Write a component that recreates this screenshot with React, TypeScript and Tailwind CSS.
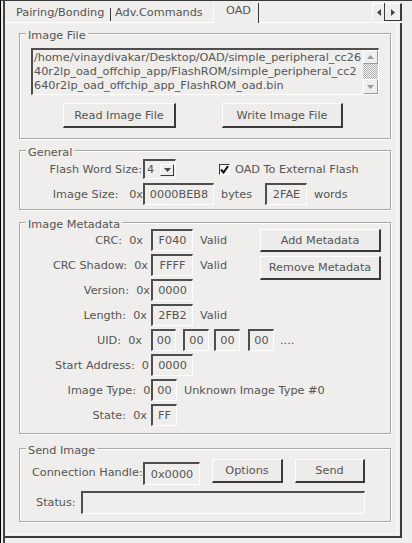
import React from 'react';

const sunken =
  'border-t-2 border-l-2 border-r border-b border-t-[#4e4e4e] border-l-[#4e4e4e] border-r-white border-b-white';
const raised =
  'border-t border-l border-r-2 border-b-2 border-t-white border-l-white border-r-[#3a3a3a] border-b-[#3a3a3a] bg-[#edecea]';

type Kids = { children?: React.ReactNode; className?: string };

function Group({ title, className = '', children }: Kids & { title: string }) {
  return (
    <div
      className={`relative ml-[14px] w-[372px] border border-[#a8a8a8] shadow-[inset_1px_1px_0_#fff,1px_1px_0_#fff] ${className}`}
    >
      <span className="absolute left-[6px] -top-[5px] px-[2px] leading-[14px] bg-[#efeeec]">{title}</span>
      {children}
    </div>
  );
}

function Field({ value = '', className = '' }: { value?: string; className?: string }) {
  return <div className={`${sunken} flex items-center justify-center h-[22px] ${className}`}>{value}</div>;
}

function Btn({ label, className = '' }: { label: string; className?: string }) {
  return <div className={`${raised} flex items-center justify-center ${className}`}>{label}</div>;
}

function Arrow({ dir, color = '#444' }: { dir: 'up' | 'down' | 'left' | 'right'; color?: string }) {
  const pts = {
    up: '0,4 3.5,0 7,4',
    down: '0,0 7,0 3.5,4',
    left: '4,0 4,7 0,3.5',
    right: '0,0 0,7 4,3.5',
  }[dir];
  const vert = dir === 'up' || dir === 'down';
  return (
    <svg width={vert ? 7 : 4} height={vert ? 4 : 7} viewBox={vert ? '0 0 7 4' : '0 0 4 7'}>
      <polygon points={pts} fill={color} />
    </svg>
  );
}

function MetaRow({
  label,
  pr = '',
  span = '',
  children,
}: Kids & { label: string; pr?: string; span?: string }) {
  return (
    <div className="flex items-center h-[22px]">
      <div className={`w-[131px] flex justify-end overflow-hidden whitespace-pre ${pr}`}>
        <span className={span}>{label}</span>
      </div>
      {children}
    </div>
  );
}

export default function App() {
  return (
    <div className="w-[412px] h-[543px] overflow-hidden flex bg-[#efeeec] border-t border-t-[#3a3a3a] border-l border-l-black font-['DejaVu_Sans',sans-serif] text-[11.25px] leading-[13px] text-[#555]">
      <div className="w-[2px] shrink-0" />
      <div className="w-[2px] shrink-0 bg-[#444]" />
      <div className="flex flex-col w-[397px]">
        {/* tab strip */}
        <div className="flex h-[22px] w-[397px]">
          <div className="w-[105px] pl-[11px] pt-[5px] border-b border-b-white whitespace-nowrap">Pairing/Bonding</div>
          <div className="w-px h-[22px] pt-[7px] border-b border-b-white">
            <div className="h-[13px] bg-[#3a3a3a]" />
          </div>
          <div className="w-[102px] pl-[4px] pt-[5px] border-b border-b-white whitespace-nowrap">Adv.Commands</div>
          <div className="self-end w-[46px] h-[20px] pt-[1px] pl-[12px] border-l border-l-white border-r border-r-[#3a3a3a]">
            OAD
          </div>
          <div className="flex-1 flex justify-end border-b border-b-white">
            <div className="flex mt-[2px] h-[18px]">
              <div className="w-[12px] flex items-center justify-center border-t border-t-white border-l border-l-white">
                <Arrow dir="left" />
              </div>
              <div className="w-px bg-[#3a3a3a]" />
              <div className="w-[17px] flex items-center justify-center border-t border-t-white border-r-2 border-r-[#3a3a3a] border-b border-b-[#3a3a3a]">
                <Arrow dir="right" />
              </div>
            </div>
          </div>
        </div>

        {/* page */}
        <div className="h-[515px] w-[397px] border-r-2 border-b-2 border-[#3a3a3a] shadow-[inset_-2px_-2px_0_#efeeec,inset_-3px_-3px_0_#fafafa] pt-[10px]">
          <Group title="Image File" className="h-[106px]">
            <div className="ml-[11px] mt-[14px] w-[348px] h-[47px] flex border-t-2 border-l-2 border-r border-b border-t-[#4e4e4e] border-l-[#4e4e4e] border-r-white border-b-white">
              <div className="flex-1 pl-[1px] pt-[1px] leading-[14px] whitespace-nowrap overflow-hidden">
                <div>/home/vinaydivakar/Desktop/OAD/simple_peripheral_cc26</div>
                <div>40r2lp_oad_offchip_app/FlashROM/simple_peripheral_cc2</div>
                <div>640r2lp_oad_offchip_app_FlashROM_oad.bin</div>
              </div>
              <div className="w-[15px] flex flex-col">
                <div className="h-[14px] flex items-center justify-center border-t border-l border-t-white border-l-white border-r border-b border-r-[#9a9a9a] border-b-[#9a9a9a]">
                  <Arrow dir="up" color="#9a9a9a" />
                </div>
                <div className="flex-1 bg-[image:repeating-conic-gradient(#b0b0b0_0%_25%,#f2f2f2_0%_50%)] bg-[length:2px_2px]" />
                <div className="h-[15px] flex items-center justify-center border-t border-l border-t-white border-l-white border-r border-b border-r-[#9a9a9a] border-b-[#9a9a9a]">
                  <Arrow dir="down" color="#9a9a9a" />
                </div>
              </div>
            </div>
            <div className="flex mt-[8px] ml-[43px]">
              <Btn label="Read Image File" className="w-[113px] h-[25px]" />
              <Btn label="Write Image File" className="ml-[46px] w-[121px] h-[25px]" />
            </div>
          </Group>

          <Group title="General" className="mt-[11px] h-[60px]">
            <div className="flex items-center h-[20px] mt-[8px]">
              <div className="w-[123px] pr-[1px] text-right whitespace-nowrap">Flash Word Size:</div>
              <div className={`${sunken} w-[33px] h-[20px] flex items-center justify-between pl-[2px]`}>
                <span>4</span>
                <div className="mr-[1px] w-[14px] h-[12px] flex items-center justify-center border-t border-l border-t-white border-l-white border-r border-b border-r-[#3a3a3a] border-b-[#3a3a3a]">
                  <Arrow dir="down" />
                </div>
              </div>
              <div className="ml-[43px] w-[11px] h-[11px] flex items-center justify-center border-t border-l border-t-[#3a3a3a] border-l-[#3a3a3a] border-r border-b border-r-white border-b-white bg-[#f4f4f4]">
                <svg width="9" height="9" viewBox="0 0 9 9">
                  <path d="M1 4.5 L3.5 7.5 L8 1.2" fill="none" stroke="#111" strokeWidth="2" />
                </svg>
              </div>
              <span className="ml-[5px] whitespace-nowrap">OAD To External Flash</span>
            </div>
            <div className="flex items-center h-[22px] mt-[4px]">
              <div className="w-[123px] text-right whitespace-pre">Image Size:   0x</div>
              <Field value="0000BEB8" className="w-[71px]" />
              <span className="ml-[7px]">bytes</span>
              <Field value="2FAE" className="ml-[13px] w-[42px]" />
              <span className="ml-[7px]">words</span>
            </div>
          </Group>

          <Group title="Image Metadata" className="mt-[12px] h-[212px]">
            <div className="flex flex-col gap-[3px] pt-[6px] pr-[9px]">
              <MetaRow label="CRC:  0x" pr="pr-[8px]">
                <Field value="F040" className="w-[42px]" />
                <span className="ml-[7px]">Valid</span>
                <Btn label="Add Metadata" className="ml-auto self-start w-[121px] h-[23px]" />
              </MetaRow>
              <MetaRow label="CRC Shadow:  0x" pr="pr-[3px]">
                <Field value="FFFF" className="w-[42px]" />
                <span className="ml-[7px]">Valid</span>
                <Btn label="Remove Metadata" className="ml-auto self-start mt-[2px] w-[121px] h-[24px]" />
              </MetaRow>
              <MetaRow label="Version:  0x" pr="pr-[1px]">
                <Field value="0000" className="w-[42px]" />
              </MetaRow>
              <MetaRow label="Length:  0x" pr="pr-[4px]">
                <Field value="2FB2" className="w-[42px]" />
                <span className="ml-[7px]">Valid</span>
              </MetaRow>
              <MetaRow label="UID:  0x" pr="pr-[9px]">
                <Field value="00" className="w-[25px]" />
                <Field value="00" className="ml-[7px] w-[26px]" />
                <Field value="00" className="ml-[5px] w-[26px]" />
                <Field value="00" className="ml-[8px] w-[26px]" />
                <span className="ml-[6px]">....</span>
              </MetaRow>
              <MetaRow label="Start Address:  0" pr="pr-[2px]">
                <Field value="0000" className="w-[42px]" />
              </MetaRow>
              <MetaRow label="Image Type:  0x" span="mr-[-6px]">
                <Field value="00" className="w-[26px]" />
                <span className="ml-[7px] whitespace-nowrap">Unknown Image Type #0</span>
              </MetaRow>
              <MetaRow label="State:  0x" pr="pr-[4px]">
                <Field value="FF" className="w-[26px]" />
              </MetaRow>
            </div>
          </Group>

          <Group title="Send Image" className="mt-[14px] h-[74px]">
            <div className="flex items-start h-[26px] mt-[10px] pl-[12px]">
              <div className="w-[111px] mt-[7px] whitespace-nowrap">Connection Handle:</div>
              <Field value="0x0000" className="mt-[3px] w-[57px] h-[23px]" />
              <Btn label="Options" className="ml-[12px] w-[71px] h-[24px]" />
              <Btn label="Send" className="ml-[12px] w-[70px] h-[24px]" />
            </div>
            <div className="flex items-center mt-[6px] pl-[16px]">
              <span>Status:</span>
              <div className={`${sunken} ml-[5px] w-[284px] h-[23px]`} />
            </div>
          </Group>
        </div>
      </div>
    </div>
  );
}
